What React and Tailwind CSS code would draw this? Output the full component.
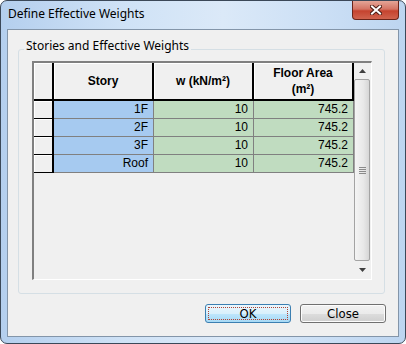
import React from 'react';

const UI_FONT = { fontFamily: '"Noto Sans", "Liberation Sans", sans-serif' };
const GRID_FONT = { fontFamily: '"Liberation Sans", Arial, sans-serif' };
const BTN_FONT = { fontFamily: '"DejaVu Sans Condensed", "Liberation Sans Narrow", "Liberation Sans", sans-serif', fontStretch: 'condensed' };

const rows = [
  { story: '1F', w: '10', area: '745.2' },
  { story: '2F', w: '10', area: '745.2' },
  { story: '3F', w: '10', area: '745.2' },
  { story: 'Roof', w: '10', area: '745.2' },
];

function CloseGlyph() {
  return (
    <svg width="12" height="10" viewBox="0 0 12 10">
      <path d="M2 1.5 L10 8.5 M10 1.5 L2 8.5" stroke="#4b1c14" strokeWidth="4" strokeLinecap="square" fill="none" />
      <path d="M2 1.5 L10 8.5 M10 1.5 L2 8.5" stroke="#ffffff" strokeWidth="2" strokeLinecap="square" fill="none" />
    </svg>
  );
}

function Arrow({ down }) {
  return (
    <svg width="7" height="4" viewBox="0 0 7 4">
      <path d={down ? 'M0 0 H7 L3.5 4 Z' : 'M0 4 H7 L3.5 0 Z'} fill="#3f3f3f" />
    </svg>
  );
}

function Scrollbar() {
  return (
    <div className="w-[17px] flex flex-col bg-[#f0f0f0]">
      <div className="h-[16px] flex items-center justify-center">
        <Arrow />
      </div>
      <div className="h-[182px] w-[16px] rounded-[2px] border border-[#a3a3a3] bg-[linear-gradient(to_right,#f4f4f4,#e8e8e8_60%,#d6d6d6)] flex flex-col items-center justify-center gap-[1px]">
        <div className="w-[7px] h-[1px] bg-[#8a8a8a]" />
        <div className="w-[7px] h-[1px] bg-[#8a8a8a]" />
        <div className="w-[7px] h-[1px] bg-[#8a8a8a]" />
        <div className="w-[7px] h-[1px] bg-[#8a8a8a]" />
      </div>
      <div className="flex-1 flex items-center justify-center">
        <Arrow down />
      </div>
    </div>
  );
}

function Grid() {
  return (
    <div
      className="mt-[1px] w-[340px] h-[219px] flex bg-[#f0f0f0] border-l-2 border-t-2 border-r border-b border-l-[#808080] border-t-[#808080] border-r-white border-b-white"
      style={GRID_FONT}
    >
      <div className="w-[320px] flex flex-col text-[12px] text-black">
        <div className="h-[38px] flex font-bold">
          <div className="w-[20px] border-r-2 border-b-2 border-black bg-[#f0f0f0] shadow-[inset_1px_1px_0_#fff]" />
          <div className="w-[100px] border-r-2 border-b-2 border-black bg-[#f0f0f0] shadow-[inset_1px_1px_0_#fff] flex items-center justify-center">
            Story
          </div>
          <div className="w-[100px] border-r-2 border-b-2 border-black bg-[#f0f0f0] shadow-[inset_1px_1px_0_#fff] flex items-center justify-center">
            w (kN/m²)
          </div>
          <div className="w-[100px] border-r-2 border-b-2 border-black bg-[#f0f0f0] shadow-[inset_1px_1px_0_#fff] flex flex-col items-center justify-center leading-[16px]">
            <span>Floor Area</span>
            <span>(m²)</span>
          </div>
        </div>
        {rows.map((r) => (
          <div key={r.story} className="h-[18px] flex leading-[17px]">
            <div className="w-[20px] border-r-2 border-b border-black bg-[#f0f0f0] shadow-[inset_1px_1px_0_#fff]" />
            <div className="w-[100px] border-r border-b border-[#808080] bg-[#a6caf0] text-right pr-[5px]">{r.story}</div>
            <div className="w-[100px] border-r border-b border-[#808080] bg-[#c0dcc0] text-right pr-[5px]">{r.w}</div>
            <div className="w-[100px] border-r border-b border-[#808080] bg-[#c0dcc0] text-right pr-[5px]">{r.area}</div>
          </div>
        ))}
      </div>
      <Scrollbar />
    </div>
  );
}

function WinButton({ children, primary }) {
  return (
    <button
      className={
        'relative w-[86px] h-[19px] rounded-[3px] border text-[13px] leading-[17px] text-black ' +
        (primary
          ? 'border-[#3c7fb1] bg-[linear-gradient(to_bottom,#eaf6fd,#d9f0fc_50%,#bee6fd_50%,#a7d9f5)]'
          : 'border-[#707070] bg-[linear-gradient(to_bottom,#f2f2f2,#ebebeb_50%,#dddddd_50%,#cfcfcf)] shadow-[inset_0_0_0_1px_#fcfcfc]')
      }
      style={BTN_FONT}
    >
      {primary && <span className="absolute inset-[2px] border border-dotted border-[#b04434]" />}
      {children}
    </button>
  );
}

export default function App() {
  return (
    <div
      className="w-[406px] h-[344px] rounded-[7px] border border-[#3b4858] px-[6px] pb-[6px] flex flex-col bg-[linear-gradient(to_right,#b4cfee,#cfe2f6_30%,#dbe9f8_55%,#cbdff5_80%,#bdd5f0)]"
      style={UI_FONT}
    >
      <div className="h-[28px] flex justify-between items-start">
        <div className="mt-[5px] ml-[1px] text-[12px] leading-[16px] text-black">Define Effective Weights</div>
        <div className="w-[47px] h-[19px] rounded-b-[4px] border border-t-0 border-[#6a2419] bg-[linear-gradient(to_bottom,#e4a597,#d47464_45%,#c5432f_55%,#d0634e)] flex items-center justify-center">
          <CloseGlyph />
        </div>
      </div>
      <div className="h-[308px] border border-[#8395a9] bg-[#f0f0f0] flex flex-col pl-[10px] pt-[8px]">
        <fieldset className="w-[367px] border border-[#d5dfe5] rounded-[3px] pl-[13px] pr-[12px] pb-[13px]">
          <legend className="ml-[-8px] px-[2px] pb-[6px] text-[12px] leading-[16px] text-black">
            Stories and Effective Weights
          </legend>
          <Grid />
        </fieldset>
        <div className="mt-[10px] pr-[12px] flex justify-end gap-[9px]">
          <WinButton primary>OK</WinButton>
          <WinButton>Close</WinButton>
        </div>
      </div>
    </div>
  );
}
